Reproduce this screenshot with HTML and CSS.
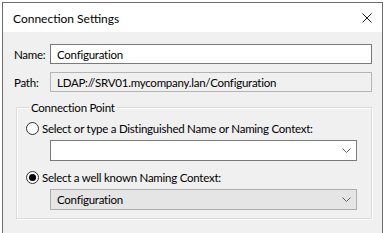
FILE: index.html
```html
<!DOCTYPE html>
<html lang="en">
<head>
  <meta charset="UTF-8" />
  <title>Connection Settings</title>
  <link rel="stylesheet" href="styles.css">
</head>
<body>
  <div class="window">
    <div class="titlebar">
      <span class="title">Connection Settings</span>
      <svg class="close" width="10" height="10" viewBox="0 0 10 10">
        <path d="M0.5 0.5 L9.5 9.5 M9.5 0.5 L0.5 9.5" stroke="#222" stroke-width="1" fill="none"/>
      </svg>
    </div>

    <div class="content">
      <div class="row">
        <label class="lbl" for="name">Name:</label>
        <input class="field" id="name" type="text" value="Configuration" />
      </div>
      <div class="row">
        <span class="lbl">Path:</span>
        <div class="field readonly">LDAP://SRV01.mycompany.lan/Configuration</div>
      </div>

      <fieldset class="group">
        <legend>Connection Point</legend>

        <div class="option">
          <span class="radio"></span>
          <span>Select or type a Distinguished Name or Naming Context:</span>
        </div>
        <div class="combo">
          <span class="combo-text"></span>
          <svg class="chev" width="9" height="5" viewBox="0 0 9 5"><polyline points="0.5,0.5 4.5,4.5 8.5,0.5" stroke="#606060" fill="none"/></svg>
        </div>

        <div class="option">
          <span class="radio checked"></span>
          <span>Select a well known Naming Context:</span>
        </div>
        <div class="combo disabled">
          <span class="combo-text">Configuration</span>
          <svg class="chev" width="9" height="5" viewBox="0 0 9 5"><polyline points="0.5,0.5 4.5,4.5 8.5,0.5" stroke="#606060" fill="none"/></svg>
        </div>
      </fieldset>
    </div>
  </div>
</body>
</html>
```

FILE: styles.css
```css
* {
  box-sizing: border-box;
}
html, body {
  margin: 0;
  background: #fff;
}
body {
  font-family: Lato, "Noto Sans", sans-serif;
  font-size: 11.5px;
  letter-spacing: -0.25px;
  color: #000;
  padding: 2px 0 0 2px;
}
.window {
  width: 381px;
  height: 240px;
  border: 1px solid #6d6d6d;
  border-bottom: none;
  background: #f0f0f0;
}
.titlebar {
  height: 29px;
  background: #fff;
  display: flex;
  align-items: center;
  justify-content: space-between;
  padding: 0 10px 0 10px;
}
.title {
  font-size: 12px;
  letter-spacing: 0;
  margin-top: 1px;
}
.close {
  margin-top: 1px;
}
.content {
  padding: 12px 10px 0 11px;
}
.row {
  display: flex;
  align-items: center;
  margin-bottom: 8px;
}
.lbl {
  width: 36px;
}
.field {
  flex: 1;
  height: 20px;
  border: 1px solid #7a7a7a;
  background: #fff;
  font: inherit;
  letter-spacing: inherit;
  padding: 0 6px;
  margin: 0;
  outline: none;
  display: flex;
  align-items: center;
}
.readonly {
  border-color: #b5b5b5;
  background: #f0f0f0;
}
.group {
  margin: 9px 0 0 2px;
  padding: 2px 14px 10px 9px;
  border: 1px solid #dcdcdc;
  box-shadow: 1px 1px 0 #fff, inset 1px 1px 0 #fff;
  height: 118px;
}
.group legend {
  padding: 0 2px;
  margin-left: 3px;
}
.option {
  display: flex;
  align-items: center;
  height: 16px;
  margin-top: 4px;
}
.radio {
  width: 13px;
  height: 13px;
  border: 1px solid #333;
  border-radius: 50%;
  background: #fff;
  margin-right: 3px;
  display: flex;
  align-items: center;
  justify-content: center;
}
.radio.checked::after {
  content: "";
  width: 7px;
  height: 7px;
  border-radius: 50%;
  background: #000;
}
.combo {
  margin: 4px 0 0 24px;
  height: 21px;
  border: 1px solid #7a7a7a;
  background: #fff;
  display: flex;
  align-items: center;
  justify-content: space-between;
  padding: 0 5px 0 6px;
}
.combo + .option {
  margin-top: 8px;
}
.combo.disabled {
  background: #e5e5e5;
  border-color: #adadad;
}
```
